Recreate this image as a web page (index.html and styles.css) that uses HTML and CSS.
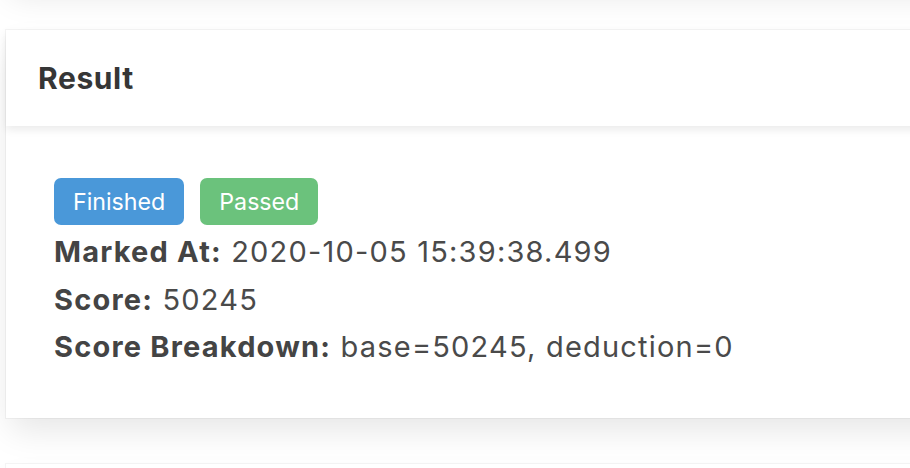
FILE: index.html
```html
<!DOCTYPE html>
<html lang="en">
<head>
<meta charset="utf-8">
<title>Result</title>
<link rel="stylesheet" href="styles.css">
</head>
<body>
<div class="page">
  <div class="card card-prev"></div>
  <div class="card">
    <header class="card-header">
      <p class="card-header-title">Result</p>
    </header>
    <div class="card-content">
      <div class="tags">
        <span class="tag is-info">Finished</span>
        <span class="tag is-success">Passed</span>
      </div>
      <div class="line"><strong>Marked At:</strong> 2020-10-05 15:39:38.499</div>
      <div class="line"><strong>Score:</strong> 50245</div>
      <div class="line"><strong>Score Breakdown:</strong> base=50245, deduction=0</div>
    </div>
  </div>
  <div class="card card-next"></div>
</div>
</body>
</html>
```

FILE: styles.css
```css
html, body {
  margin: 0;
  padding: 0;
  background: #fff;
  overflow: hidden;
}
body {
  font-family: Inter, "Liberation Sans", sans-serif;
  color: #4a4a4a;
}
.page {
  padding-left: 6px;
  margin-right: -200px;
}
.card {
  background: #fff;
  box-shadow: 0 16px 32px -4px rgba(10, 10, 10, 0.1), 0 0 0 1px rgba(10, 10, 10, 0.04);
  margin-bottom: 46px;
}
.card-prev {
  height: 100px;
  margin-top: -116px;
}
.card-next {
  height: 100px;
}
.card-header {
  display: flex;
  height: 96px;
  box-shadow: 0 4px 8px rgba(10, 10, 10, 0.08);
}
.card-header-title {
  margin: 0;
  padding: 24px 32px;
  font-size: 30px;
  line-height: 48px;
  font-weight: 700;
  letter-spacing: 0.6px;
  color: #363636;
}
.card-content {
  padding: 52px 48px 47px;
}
.tags {
  display: flex;
  gap: 16px;
  margin-bottom: 3px;
}
.tag {
  display: inline-flex;
  align-items: center;
  height: 47px;
  padding: 0 19px;
  border-radius: 7px;
  font-size: 23.2px;
  color: #fff;
}
.is-info { background: #4a98d9; }
.is-success { background: #6bc27c; }
.line {
  font-size: 29px;
  line-height: 47.5px;
  letter-spacing: 1.2px;
  color: #4a4a4a;
}
.line strong {
  font-weight: 700;
  color: #444;
}
```
